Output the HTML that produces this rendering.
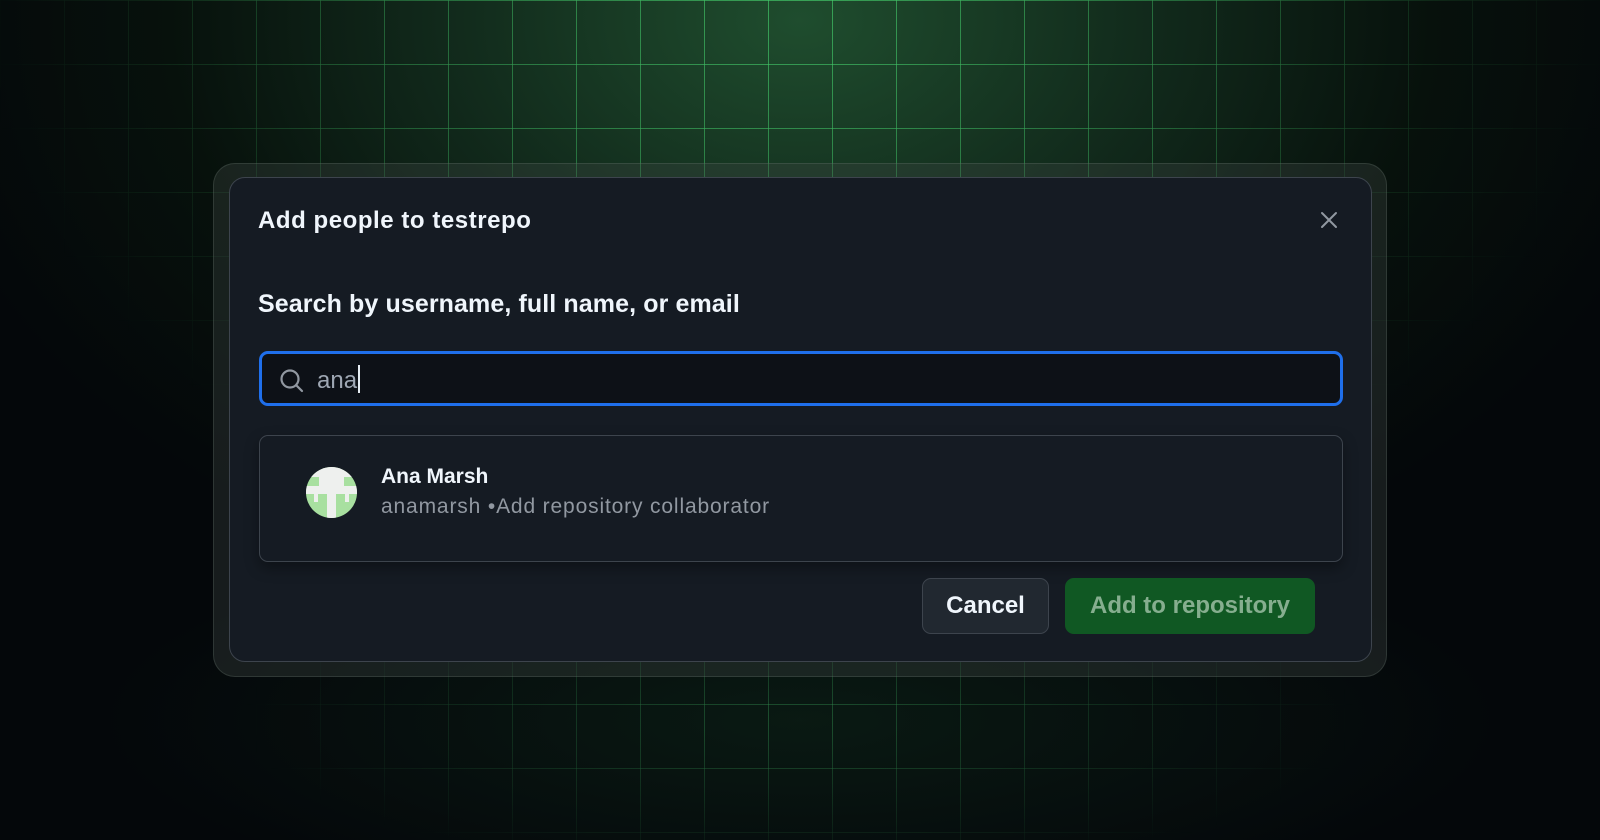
<!DOCTYPE html>
<html><head><meta charset="utf-8"><style>
*{margin:0;padding:0;box-sizing:border-box}
html,body{width:1600px;height:840px;overflow:hidden;background:#04070a;font-family:"Liberation Sans",sans-serif}
.glow{position:absolute;inset:0;background:radial-gradient(ellipse 900px 620px at 800px 20px,#1f4d2e 0%,#11291b 40%,#07110c 70%,rgba(4,7,10,0) 100%)}
.glow2{position:absolute;inset:0;background:radial-gradient(ellipse 700px 200px at 800px 720px,rgba(20,60,35,.35),rgba(0,0,0,0) 100%)}
.grid{position:absolute;inset:0;
background-image:linear-gradient(to right,rgba(70,210,110,.65) 1px,transparent 1px),linear-gradient(to bottom,rgba(70,210,110,.65) 1px,transparent 1px);
background-size:64px 64px;
-webkit-mask-image:radial-gradient(ellipse 820px 580px at 800px 0px,#000 0%,rgba(0,0,0,.55) 50%,rgba(0,0,0,.15) 80%,transparent 100%);
mask-image:radial-gradient(ellipse 820px 580px at 800px 0px,#000 0%,rgba(0,0,0,.55) 50%,rgba(0,0,0,.15) 80%,transparent 100%)}
.grid2{position:absolute;inset:0;
background-image:linear-gradient(to right,rgba(70,200,110,.45) 1px,transparent 1px),linear-gradient(to bottom,rgba(70,200,110,.45) 1px,transparent 1px);
background-size:64px 64px;
-webkit-mask-image:radial-gradient(ellipse 560px 160px at 800px 720px,rgba(0,0,0,.7),transparent 100%);
mask-image:radial-gradient(ellipse 560px 160px at 800px 720px,rgba(0,0,0,.7),transparent 100%)}
.outer{position:absolute;left:213px;top:163px;width:1174px;height:514px;border-radius:22px;background:rgba(60,70,65,.35);border:1px solid rgba(120,130,125,.25)}
.dlg{position:absolute;left:229px;top:177px;width:1143px;height:485px;border-radius:16px;background:#151b23;border:1px solid #3d444d}
.title{position:absolute;left:28px;top:29px;font-size:24px;font-weight:bold;color:#f0f6fc;letter-spacing:.55px}
.close{position:absolute;left:1090px;top:33px}
.label{position:absolute;left:28px;top:112px;font-size:25px;font-weight:bold;color:#f0f6fc;letter-spacing:.1px}
.input{position:absolute;left:29px;top:173px;width:1084px;height:55px;border:3px solid #1f6feb;border-radius:9px;background:#0d1117}
.input .t{position:absolute;left:55px;top:11px;font-size:24px;color:#9ea7b3}
.cursor{display:inline-block;width:2px;height:28px;background:#e6edf3;vertical-align:-5px;margin-left:1px}
.res{position:absolute;left:29px;top:257px;width:1084px;height:127px;border:1px solid #3d444d;border-radius:9px;background:#151b23;box-shadow:0 6px 14px rgba(0,0,0,.35)}
.av{position:absolute;left:46px;top:31px;width:51px;height:51px;border-radius:50%;overflow:hidden}
.name{position:absolute;left:121px;top:29px;font-size:21px;font-weight:bold;color:#f0f6fc}
.sub{position:absolute;left:121px;top:59px;font-size:21px;color:#9198a1;letter-spacing:.85px}
.btn{position:absolute;top:400px;height:56px;border-radius:9px;font-size:24px;font-weight:bold;text-align:center;line-height:54px}
.cancel{left:692px;width:127px;background:#212830;border:1px solid #3d444d;color:#f0f6fc}
.add{left:835px;width:250px;background:#105823;color:#86ae8f;border:1px solid #105823}
</style></head><body>
<div class="glow"></div><div class="glow2"></div><div class="grid"></div><div class="grid2"></div>
<div class="outer"></div>
<div class="dlg">
<div class="title">Add people to testrepo</div>
<svg class="close" width="18" height="18" viewBox="0 0 18 18"><path d="M2 2L16 16M16 2L2 16" stroke="#9198a1" stroke-width="2" stroke-linecap="round"/></svg>
<div class="label">Search by username, full name, or email</div>
<div class="input">
<svg style="position:absolute;left:17px;top:14px" width="26" height="26" viewBox="0 0 26 26"><circle cx="11" cy="11" r="8.5" fill="none" stroke="#9198a1" stroke-width="2.2"/><path d="M17.5 17.5L23 23" stroke="#9198a1" stroke-width="2.2" stroke-linecap="round"/></svg>
<div class="t">ana<span class="cursor"></span></div>
</div>
<div class="res">
<div class="av"><svg width="51" height="51" viewBox="0 0 51 51"><rect width="51" height="51" fill="#a8e0a0"/><rect x="0" y="0" width="51" height="10" fill="#eef0ee"/><rect x="13" y="10" width="25" height="9" fill="#eef0ee"/><rect x="0" y="19" width="51" height="8" fill="#eef0ee"/><rect x="21" y="27" width="9" height="24" fill="#eef0ee"/><rect x="8" y="27" width="4" height="8" fill="#eef0ee"/><rect x="39" y="27" width="4" height="8" fill="#eef0ee"/></svg></div>
<div class="name">Ana Marsh</div>
<div class="sub">anamarsh •Add repository collaborator</div>
</div>
<div class="btn cancel">Cancel</div>
<div class="btn add">Add to repository</div>
</div>
</body></html>
